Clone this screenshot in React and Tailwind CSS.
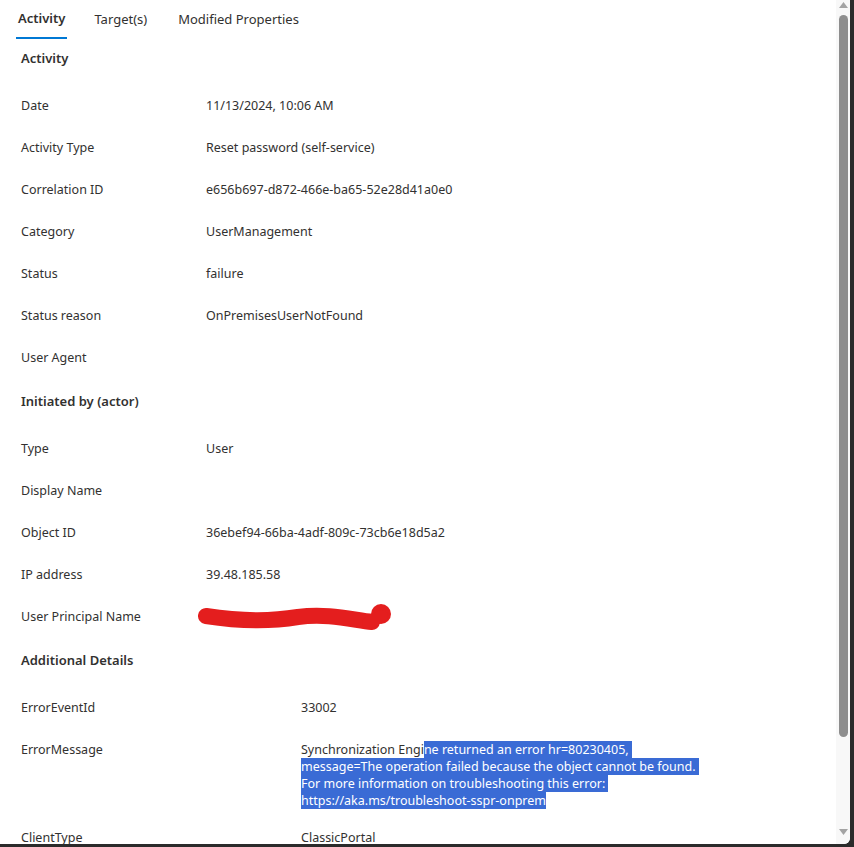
import React from "react";

const font = { fontFamily: '"Noto Sans", "Segoe UI", sans-serif' };

function Heading({ children, first }) {
  return (
    <div
      className={`${first ? "pt-[9px]" : "pt-[12px]"} pb-[17px] text-[13px] leading-[20px] font-semibold text-[#323130]`}
    >
      {children}
    </div>
  );
}

function Row({ label, value, wide, children, className = "" }) {
  return (
    <div className={`relative flex min-h-[42px] pt-[12px] pb-[13px] text-[12.5px] leading-[17px] text-[#323130] ${className}`}>
      <div className={`${wide ? "w-[280px]" : "w-[185px]"} shrink-0`}>{label}</div>
      <div className="flex-1">{children ?? value}</div>
    </div>
  );
}

const hl = "inline-block bg-[#3a6bd5] text-white whitespace-pre";

export default function App() {
  return (
    <div className="w-[854px] h-[847px] bg-[#2b2b2b] overflow-hidden" style={font}>
      <div className="flex w-[850px] h-[844px] bg-white rounded-br-[6px] overflow-hidden">
        <div className="flex-1 min-w-0 overflow-hidden">
          {/* Tabs */}
          <div className="flex h-[39px] pl-[16px] text-[13px] text-[#323130]">
            <div className="h-[39px] px-[2px] pt-[1px] flex items-center border-b-2 border-[#0078d4] font-semibold">
              Activity
            </div>
            <div className="h-[39px] ml-[25px] px-[2px] pt-[1px] flex items-center">Target(s)</div>
            <div className="h-[39px] ml-[27px] px-[2px] pt-[1px] flex items-center">Modified Properties</div>
          </div>

          <div className="pl-[21px]">
            <Heading first>Activity</Heading>
            <Row label="Date" value="11/13/2024, 10:06 AM" />
            <Row label="Activity Type" value="Reset password (self-service)" />
            <Row label="Correlation ID" value="e656b697-d872-466e-ba65-52e28d41a0e0" />
            <Row label="Category" value="UserManagement" />
            <Row label="Status" value="failure" />
            <Row label="Status reason" value="OnPremisesUserNotFound" />
            <Row label="User Agent" value="" />

            <Heading>Initiated by (actor)</Heading>
            <Row label="Type" value="User" />
            <Row label="Display Name" value="" />
            <Row label="Object ID" value="36ebef94-66ba-4adf-809c-73cb6e18d5a2" />
            <Row label="IP address" value="39.48.185.58" />
            <Row label="User Principal Name">
              <svg
                className="absolute left-[177px] top-[8px]"
                width="200"
                height="32"
                viewBox="0 0 200 32"
              >
                <path
                  d="M8 12 C 40 17, 70 18, 100 13 C 130 9, 155 16, 174 18"
                  fill="none"
                  stroke="#e41e1e"
                  strokeWidth="16"
                  strokeLinecap="round"
                />
                <circle cx="183" cy="10" r="10" fill="#e41e1e" />
                <path d="M170 19 L 184 12" stroke="#e41e1e" strokeWidth="12" strokeLinecap="round" />
              </svg>
            </Row>

            <Heading>Additional Details</Heading>
            <Row wide label="ErrorEventId" value="33002" />
            <Row wide label="ErrorMessage" className="!pb-[8px]">
              <div>
                Synchronization Engi<span className={hl}>{"ne returned an error hr=80230405, "}</span>
              </div>
              <div>
                <span className={hl}>{"message=The operation failed because the object cannot be found. "}</span>
              </div>
              <div>
                <span className={hl}>{"For more information on troubleshooting this error: "}</span>
              </div>
              <div>
                <span className={hl}>{"https://aka.ms/troubleshoot-sspr-onprem"}</span>
              </div>
            </Row>
            <Row wide label="ClientType" value="ClassicPortal" />
          </div>
        </div>

        {/* Scrollbar */}
        <div className="w-[14px] shrink-0 bg-[#f8f8f8] flex flex-col items-center">
          <svg className="mt-[2px]" width="9" height="6" viewBox="0 0 9 6">
            <path d="M4.5 0 L9 6 L0 6 Z" fill="#a3a3a3" />
          </svg>
          <div className="mt-[7px] w-[9px] h-[722px] rounded-full bg-[#8e8e8e]" />
          <div className="flex-1" />
          <svg className="mb-[9px]" width="9" height="6" viewBox="0 0 9 6">
            <path d="M0 0 L9 0 L4.5 6 Z" fill="#a3a3a3" />
          </svg>
        </div>
      </div>
    </div>
  );
}
